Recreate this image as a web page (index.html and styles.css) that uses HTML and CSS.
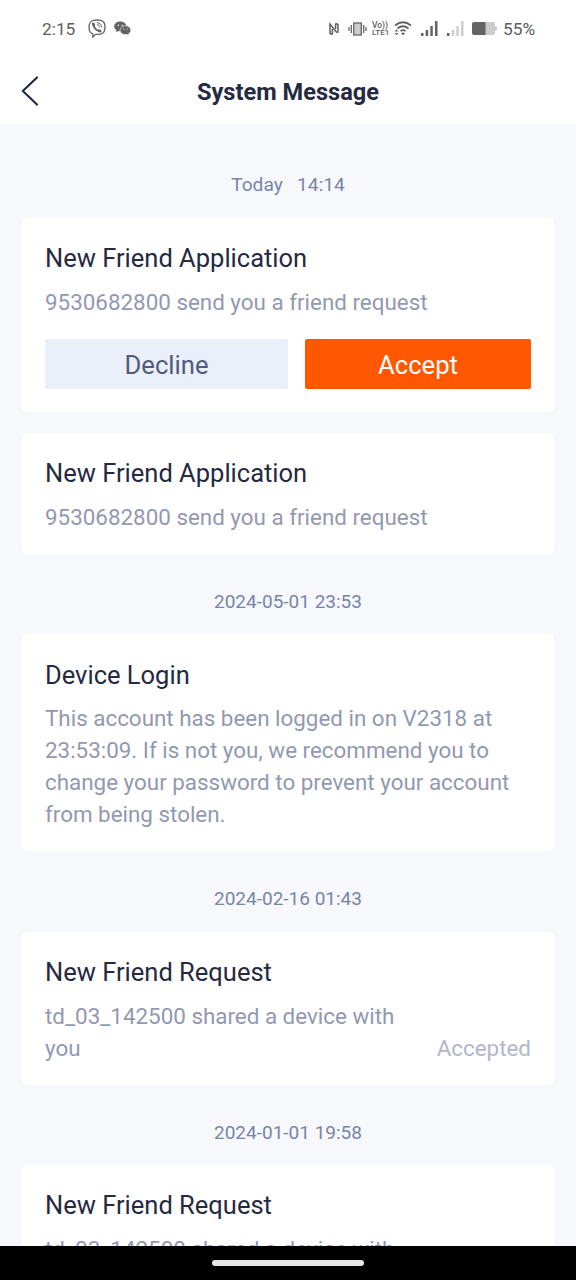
FILE: index.html
```html
<!DOCTYPE html>
<html lang="en">
<head>
<meta charset="utf-8">
<title>System Message</title>
<link rel="stylesheet" href="styles.css">
</head>
<body>
<div class="screen">
  <div class="status">
    <span class="clock">2:15</span>
    <svg class="viber" width="18" height="19" viewBox="0 0 18 19" fill="none" stroke="#666" stroke-width="1.300" stroke-linecap="round"><path d="M9 1C3.500 1 1 2.700 1 8.300c0 3.900 1.200 5.700 3.800 6.500V18l2.700-2.700c6.300.4 9.500-1 9.500-7S14.500 1 9 1z"/><path stroke-width="2" d="M5.300 4.800c-.5 2.900 3.300 7.300 6.600 7.400"/><path stroke-width="2.600" d="M5.300 5l.5 1M11 11.700l1.200.4"/><path stroke-width="1" d="M9.300 3.700c2.700 0 4.300 1.700 4.300 4.300M9.300 5.700c1.500 0 2.300.8 2.300 2.300"/></svg>
    <svg class="wechat" width="17" height="15" viewBox="0 0 17 15"><path fill="#626262" d="M6.300.5C2.700.5.2 2.700.2 5.500c0 1.600.9 2.900 2.300 3.800L2 11.200l2.200-1.100 2.100.3c3.600 0 6.100-2.100 6.100-4.900S9.900.5 6.300.5z"/><path fill="#626262" stroke="#fff" stroke-width=".6" d="M11.400 4.800c-3.100 0-5.400 2-5.400 4.400s2.300 4.400 5.400 4.400l1.700-.2 2 1-.5-1.700c1.400-.8 2.200-2 2.200-3.500C16.800 6.800 14.500 4.800 11.400 4.800z"/><g fill="#fff"><circle cx="4.300" cy="4.200" r=".7"/><circle cx="8.200" cy="4.200" r=".7"/><circle cx="9.700" cy="8" r=".6"/><circle cx="13.100" cy="8" r=".6"/></g></svg>
    <span class="spacer"></span>
    <svg class="nfc" width="10" height="14" viewBox="0 0 10 14" fill="none" stroke="#606060" stroke-width="1.500"><path d="M3.400 12.500L1 11.500V2.200l7 8.600"/><path d="M6.600 1.500L9 2.500v8.300"/><path d="M6.600 1.500V7M3.400 12.500V7"/></svg>
    <svg class="vibrate" width="19" height="14" viewBox="0 0 19 14" fill="none" stroke="#666" stroke-width="1.300"><rect x="5.700" y="1" width="7.600" height="12" fill="#ccc"/><path d="M3.300 3v8M15.700 3v8M1 5v4M18 5v4"/></svg>
    <span class="volte"><span>Vo))</span><span class="lte">LTE1</span></span>
    <svg class="wifi" width="18" height="15" viewBox="0 0 18 15" fill="none" stroke="#636363" stroke-width="1.700"><path d="M1 4.500Q9-2 17 4.500M3.500 7.500Q9 3 14.500 7.500M6.500 10.200Q9 8 11.500 10.200"/><path fill="#636363" stroke="none" d="M9 14.500l-2-2.400q2-1.400 4 0zM.7 10.500L2.500 8.300l1.800 2.200zM.7 12L2.500 14.200 4.300 12z"/></svg>
    <svg class="signal" width="17" height="15" viewBox="0 0 17 15" fill="#636363"><path d="M0 12h2.500v3H0zM4.700 9h2.500v6H4.700zM9.300 5h2.500v10H9.300zM14 0h2.500v15H14z"/></svg>
    <svg class="signal" width="17" height="15" viewBox="0 0 17 15" fill="#cecece"><path fill="#636363" d="M0 12h2.500v3H0z"/><path d="M4.700 9h2.500v6H4.700zM9.300 5h2.500v10H9.300zM14 0h2.500v15H14z"/></svg>
    <svg class="battery" width="25" height="13" viewBox="0 0 25 13"><path fill="#cbcbcb" d="M12 0h9q2 0 2 2v2l2 1v3l-2 1v2q0 2-2 2h-9z"/><path fill="#646464" d="M2 0h11.500v13H2q-2 0-2-2V2q0-2 2-2z"/></svg>
    <span class="percent">55%</span>
  </div>
  <div class="header">
    <svg class="back" width="18" height="30" viewBox="0 0 18 30" fill="none" stroke="#252a42" stroke-width="2.200" stroke-linecap="round" stroke-linejoin="round"><path d="M16 1.500L1.800 15 16 28.500"/></svg>
    <h1 class="heading">System Message</h1>
  </div>
  <div class="feed">
    <div class="date first">Today &nbsp; 14:14</div>
    <div class="card">
      <h2 class="title">New Friend Application</h2>
      <p class="text">9530682800 send you a friend request</p>
      <div class="actions">
        <button class="btn decline">Decline</button>
        <button class="btn accept">Accept</button>
      </div>
    </div>
    <div class="card follow">
      <h2 class="title">New Friend Application</h2>
      <p class="text">9530682800 send you a friend request</p>
    </div>
    <div class="date">2024-05-01 23:53</div>
    <div class="card">
      <h2 class="title">Device Login</h2>
      <p class="text">This account has been logged in on V2318 at<br>23:53:09. If is not you, we recommend you to<br>change your password to prevent your account<br>from being stolen.</p>
    </div>
    <div class="date">2024-02-16 01:43</div>
    <div class="card">
      <h2 class="title">New Friend Request</h2>
      <div class="row">
        <p class="text">td_03_142500 shared a device with<br>you</p>
        <span class="state">Accepted</span>
      </div>
    </div>
    <div class="date">2024-01-01 19:58</div>
    <div class="card">
      <h2 class="title">New Friend Request</h2>
      <p class="text">td_03_142500 shared a device with</p>
    </div>
  </div>
  <div class="navbar"><div class="pill"></div></div>
</div>
</body>
</html>
```
FILE: styles.css
```css
* { box-sizing: border-box; }
body { margin: 0; font-family: Roboto, "Liberation Sans", sans-serif; background: #f6f8fc; }
h1, h2, p { margin: 0; }
.screen { width: 576px; height: 1280px; display: flex; flex-direction: column; overflow: hidden; }
.status { flex: none; height: 57px; padding: 0 42px; background: #fff; display: flex; align-items: center; color: #606060; font-size: 17.300px; }
.clock { width: 46px; }
.wechat { margin-left: 8px; }
.spacer { flex: 1; }
.nfc { margin-right: 1px; }
.vibrate { margin-left: 8px; }
.volte { margin-left: 5px; width: 19px; display: flex; flex-direction: column; font-size: 8.500px; line-height: 8px; font-weight: 500; white-space: nowrap; }
.lte { font-size: 8px; }
.wifi { margin-left: 3px; }
.signal { margin-left: 9px; }
.battery { margin-left: 8px; }
.percent { margin-left: 6px; width: 31px; white-space: nowrap; }
.header { flex: none; height: 67px; background: #fff; display: grid; grid-template-columns: 54px 1fr 54px; align-items: center; }
.back { margin-left: 21px; }
.heading { padding-top: 2px; text-align: center; font-size: 23.600px; line-height: 32px; font-weight: 700; color: #252a42; }
.feed { flex: 1; min-height: 0; overflow: hidden; padding: 0 22px; }
.date { height: 80.400px; padding-top: 36px; text-align: center; font-size: 19px; line-height: 24px; color: #7a84a8; }
.date.first { height: 94px; padding-top: 49px; font-size: 19.200px; }
.card { background: #fff; border-radius: 5px; padding: 22.300px 23px 21px; }
.card.follow { margin-top: 21px; }
.title { font-size: 25.500px; line-height: 36px; font-weight: 400; color: #252a42; }
.text { margin-top: 9.700px; font-size: 22.400px; line-height: 32px; color: #9298b2; white-space: nowrap; }
.actions { display: grid; grid-template-columns: 243px 226px; gap: 17px; margin: 21px 0 2px; }
.btn { height: 50px; border: 0; border-radius: 2px; padding: 2px 0 0; font: inherit; font-size: 25.600px; }
.decline { background: #ebeff9; color: #525b7e; }
.accept { background: #ff5800; color: #fff; }
.row { display: flex; justify-content: space-between; align-items: flex-end; }
.state { font-size: 22.400px; line-height: 32px; color: #b1b6cb; }
.navbar { flex: none; height: 34px; background: #000; display: flex; justify-content: center; align-items: center; }
.pill { width: 152px; height: 6px; border-radius: 3px; background: #e6e6e6; }
```
